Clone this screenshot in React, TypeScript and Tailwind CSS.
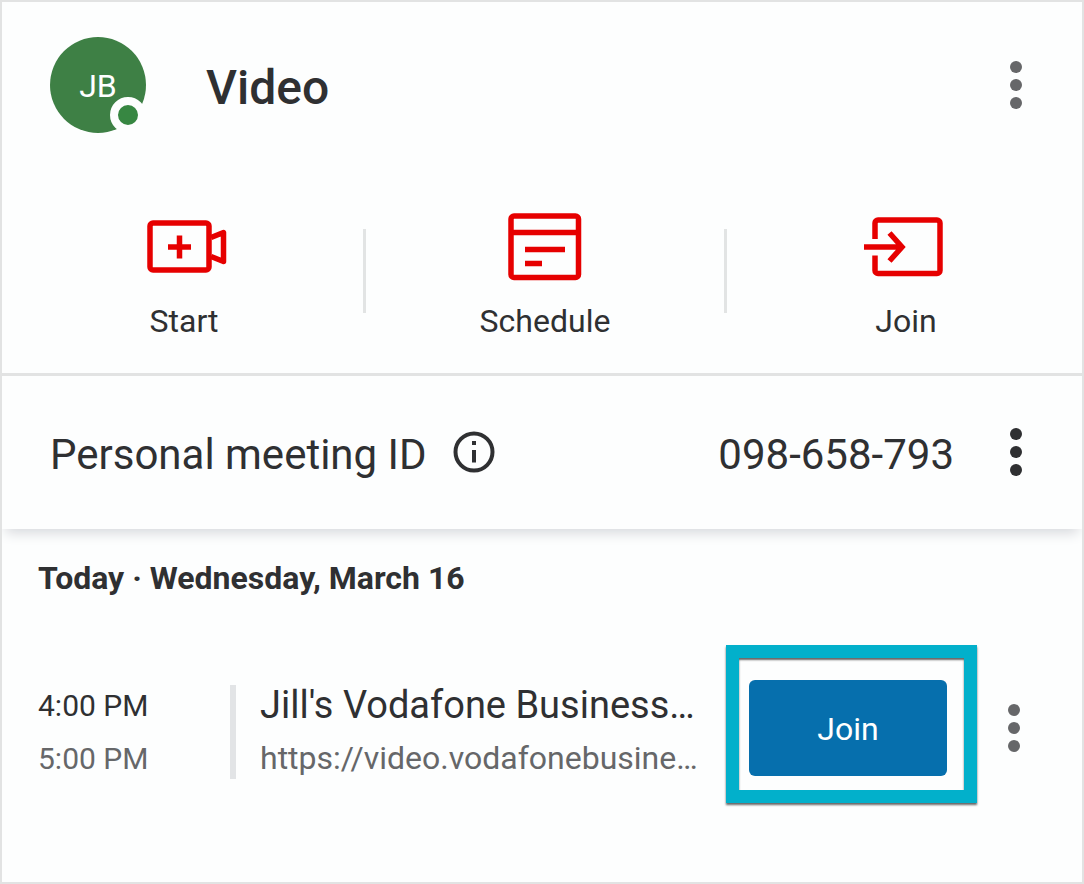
import type { ReactNode } from "react";

function MoreButton({ label, className }: { label: string; className: string }) {
  return (
    <button type="button" aria-label={label} className={`shrink-0 ${className}`}>
      <svg width="12" height="48" viewBox="0 0 12 48" fill="currentColor" aria-hidden="true">
        <circle cx="6" cy="6" r="6" />
        <circle cx="6" cy="24" r="6" />
        <circle cx="6" cy="42" r="6" />
      </svg>
    </button>
  );
}

function StartIcon() {
  return (
    <svg width="86" height="70" viewBox="-6 0 86 70" fill="none" stroke="#e60000" aria-hidden="true">
      <rect x="3" y="11" width="59" height="47" rx="3" strokeWidth="5.5" />
      <path d="M32.500 23.500v23M21 35h23" strokeWidth="5.5" />
      <path d="M64 25.500l12.500-5v29l-12.500-5" strokeWidth="5.5" strokeLinejoin="round" />
    </svg>
  );
}

function ScheduleIcon() {
  return (
    <svg width="74" height="70" viewBox="0 0 74 70" fill="none" stroke="#e60000" aria-hidden="true">
      <rect x="3" y="4" width="67.500" height="61.500" rx="3" strokeWidth="5.5" />
      <path d="M3 20.500h67M17 37.500h40M17 51.500h17" strokeWidth="5.5" />
    </svg>
  );
}

function JoinIcon() {
  return (
    <svg width="84" height="70" viewBox="0 0 84 70" fill="none" stroke="#e60000" aria-hidden="true">
      <path
        d="M11 27V11a3 3 0 0 1 3-3h59a3 3 0 0 1 3 3v47.500a3 3 0 0 1-3 3h-59a3 3 0 0 1-3-3V43.500"
        strokeWidth="5.5"
      />
      <path d="M0 35h38M25.500 21l12.500 14L25.500 49" strokeWidth="5.5" />
    </svg>
  );
}

function Action({ icon, label }: { icon: ReactNode; label: string }) {
  return (
    <button type="button" className="flex flex-1 flex-col items-center gap-[14px]">
      {icon}
      <span className="text-[32px] leading-[50px]">{label}</span>
    </button>
  );
}

export default function App() {
  return (
    <div className="min-h-screen overflow-hidden border-2 border-[#e2e3e3] bg-[#fdfefe] font-[Roboto,sans-serif] text-[#2f3032]">

      {/* Header */}
      <header className="flex items-center pt-[35px] pr-[60px] pl-12">
        <div className="relative flex size-24 shrink-0 items-center justify-center rounded-full bg-[#3e8045] pt-[2px] text-[32px] text-white">
          JB
          <span className="absolute right-0 bottom-0 size-9 rounded-full border-8 border-[#fdfefe] bg-[#378742]" />
        </div>
        <h1 className="ml-[60px] flex-1 pt-[6px] text-5xl font-medium">Video</h1>
        <MoreButton label="More options" className="text-[#666769]" />
      </header>

      {/* Actions */}
      <nav className="-mr-1 flex items-center border-b-[3px] border-[#e2e3e3] pt-[79px] pb-[27px] pl-[2px]">
        <Action icon={<StartIcon />} label="Start" />
        <span className="-mx-[1px] mb-4 h-[84px] w-[3px] bg-[#e2e4e4]" />
        <Action icon={<ScheduleIcon />} label="Schedule" />
        <span className="-mx-[1px] mb-4 h-[84px] w-[3px] bg-[#e2e4e4]" />
        <Action icon={<JoinIcon />} label="Join" />
      </nav>

      {/* Personal meeting */}
      <section className="flex h-[153px] items-center pr-[60px] pb-[2px] pl-12 text-[42px] shadow-[0_8px_12px_-4px_#d6d8dc]">
        <span className="pt-[6px]">Personal meeting ID</span>
        <button type="button" aria-label="About personal meeting ID" className="ml-[25px]">
          <svg width="44" height="44" viewBox="0 0 44 44" fill="none" stroke="currentColor" aria-hidden="true">
            <circle cx="22" cy="22" r="18.500" strokeWidth="4" />
            <path d="M22 11v4M22 20v12.500" strokeWidth="4" />
          </svg>
        </button>
        <span className="ml-auto pt-[6px]">098-658-793</span>
        <MoreButton label="Meeting ID options" className="ml-14" />
      </section>

      {/* Today */}
      <main className="pr-[62px] pl-9">
        <h2 className="pt-6 text-[32px] leading-[50px] font-bold">Today · Wednesday, March 16</h2>
        <div className="mt-[50px] flex items-center">
          <div className="flex min-w-0 flex-1 items-center pt-2 leading-[53px]">
            <div className="w-48 shrink-0 text-[30px]">
              <p>4:00 PM</p>
              <p className="text-[#666769]">5:00 PM</p>
            </div>
            <span className="h-[94px] w-[6px] shrink-0 bg-[#e2e4e6]" />
            <div className="ml-6 min-w-0 flex-1">
              <p className="text-[38px] whitespace-nowrap">Jill's Vodafone Business…</p>
              <p className="text-[32px] whitespace-nowrap text-[#666769]">https://video.vodafonebusine…</p>
            </div>
          </div>
          <div className="-mt-2 shrink-0 border-[13px] border-[#02b0cb] pt-[22px] pr-[17px] pb-[14px] pl-[10px] shadow-[0_2px_2px_#666,inset_0_2px_2px_#666]">
            <button type="button" className="block h-24 w-[198px] rounded-md bg-[#066fad] pt-[2px] text-[32px] text-white">
              Join
            </button>
          </div>
          <MoreButton label="Meeting options" className="ml-[31px] text-[#666769]" />
        </div>
      </main>

    </div>
  );
}
